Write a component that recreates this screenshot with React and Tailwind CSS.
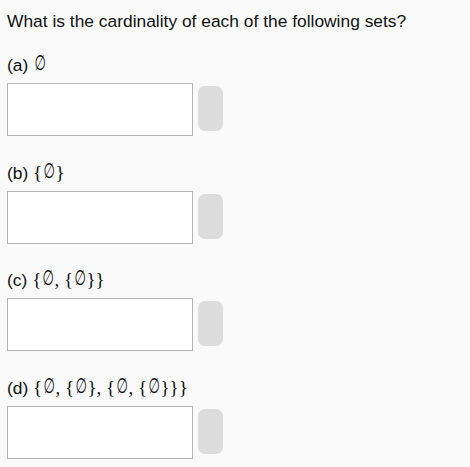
import React from "react";

const E = () => (
  <span className="inline-block font-['DejaVu_Sans',sans-serif] text-[21px] leading-[18px] scale-x-[0.62] mx-[-2.5px] align-[1px]">∅</span>
);

function Math({ parts }) {
  return (
    <span className="font-['Liberation_Serif',serif] text-[19px] leading-[18px]">
      {parts.map((p, i) =>
        p === "E" ? <E key={i} /> : <span key={i}>{p}</span>
      )}
    </span>
  );
}

function Group({ letter, parts, first }) {
  return (
    <div className={first ? "mt-[24px]" : "mt-[25.7px]"}>
      <div className="h-[18px] leading-[18px] text-[17.4px] whitespace-nowrap">
        ({letter}) <Math parts={parts} />
      </div>
      <div className="mt-[11px] flex items-start gap-[5px]">
        <div className="w-[186px] h-[53px] bg-white border border-[#b5b5b5]" />
        <div className="mt-[3px] w-[25px] h-[45px] rounded-[7px] bg-[#dcdcdc]" />
      </div>
    </div>
  );
}

export default function App() {
  return (
    <div className="min-h-[467px] w-[470px] bg-[#fafafa] text-[#111] font-['Liberation_Sans',Arial,sans-serif] pl-[7px] pt-[12px]">
      <div className="h-[18px] text-[17.4px] leading-[18px] whitespace-nowrap">What is the cardinality of each of the following sets?</div>
      <Group first letter="a" parts={["E"]} />
      <Group letter="b" parts={["{", "E", "}"]} />
      <Group letter="c" parts={["{", "E", ", {", "E", "}}"]} />
      <Group letter="d" parts={["{", "E", ", {", "E", "}, {", "E", ", {", "E", "}}}"]} />
    </div>
  );
}
